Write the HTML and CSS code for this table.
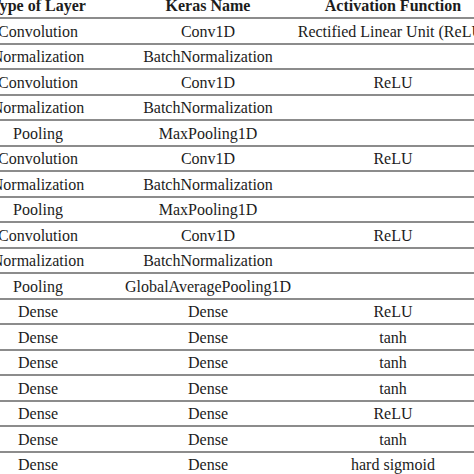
FILE: index.html
```html
<!DOCTYPE html>
<html lang="en">
<head>
<meta charset="utf-8">
<title>Layers</title>
<link rel="stylesheet" href="styles.css">
</head>
<body>
<div class="table">
  <div class="row head"><div class="cell">Type of Layer</div><div class="cell">Keras Name</div><div class="cell">Activation Function</div></div>
  <div class="row"><div class="cell">Convolution</div><div class="cell">Conv1D</div><div class="cell">Rectified Linear Unit (ReLU)</div></div>
  <div class="row"><div class="cell">Normalization</div><div class="cell">BatchNormalization</div><div class="cell"></div></div>
  <div class="row"><div class="cell">Convolution</div><div class="cell">Conv1D</div><div class="cell">ReLU</div></div>
  <div class="row"><div class="cell">Normalization</div><div class="cell">BatchNormalization</div><div class="cell"></div></div>
  <div class="row"><div class="cell">Pooling</div><div class="cell">MaxPooling1D</div><div class="cell"></div></div>
  <div class="row"><div class="cell">Convolution</div><div class="cell">Conv1D</div><div class="cell">ReLU</div></div>
  <div class="row"><div class="cell">Normalization</div><div class="cell">BatchNormalization</div><div class="cell"></div></div>
  <div class="row"><div class="cell">Pooling</div><div class="cell">MaxPooling1D</div><div class="cell"></div></div>
  <div class="row"><div class="cell">Convolution</div><div class="cell">Conv1D</div><div class="cell">ReLU</div></div>
  <div class="row"><div class="cell">Normalization</div><div class="cell">BatchNormalization</div><div class="cell"></div></div>
  <div class="row"><div class="cell">Pooling</div><div class="cell">GlobalAveragePooling1D</div><div class="cell"></div></div>
  <div class="row"><div class="cell">Dense</div><div class="cell">Dense</div><div class="cell">ReLU</div></div>
  <div class="row"><div class="cell">Dense</div><div class="cell">Dense</div><div class="cell">tanh</div></div>
  <div class="row"><div class="cell">Dense</div><div class="cell">Dense</div><div class="cell">tanh</div></div>
  <div class="row"><div class="cell">Dense</div><div class="cell">Dense</div><div class="cell">tanh</div></div>
  <div class="row"><div class="cell">Dense</div><div class="cell">Dense</div><div class="cell">ReLU</div></div>
  <div class="row"><div class="cell">Dense</div><div class="cell">Dense</div><div class="cell">tanh</div></div>
  <div class="row"><div class="cell">Dense</div><div class="cell">Dense</div><div class="cell">hard sigmoid</div></div>
</div>
</body>
</html>
```
FILE: styles.css
```css
html, body {
  margin: 0;
  padding: 0;
  overflow: hidden;
  background: #ffffff;
}
body {
  width: 474px;
  height: 474px;
  font-family: "Liberation Serif", "Times New Roman", serif;
  font-size: 16px;
  color: #1c1c1c;
}
.table {
  width: 526px;
  margin-left: -40px;
  margin-top: -6.2px;
}
.row {
  display: grid;
  grid-template-columns: 156px 184px 186px;
  height: 25.5px;
  box-sizing: border-box;
  border-bottom: 2px solid #8c8c8c;
}
.cell {
  display: flex;
  justify-content: center;
  white-space: nowrap;
  line-height: 23.5px;
  padding-top: 0.5px;
}
.head .cell {
  font-weight: bold;
}
```
